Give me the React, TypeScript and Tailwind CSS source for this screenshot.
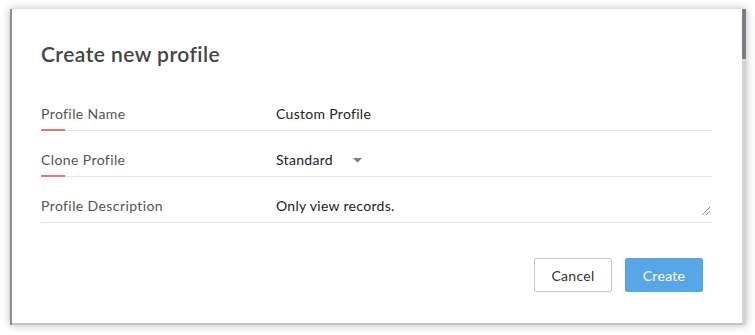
import React from "react";

function Row({
  label,
  value,
  marked,
  children,
}: {
  label: string;
  value: string;
  marked?: boolean;
  children?: React.ReactNode;
}) {
  return (
    <div className="relative flex h-[46px] items-end border-b border-[#e6e6e6] pb-[6px]">
      <div className="w-[235px] text-[14px] leading-[20px] tracking-[0.4px] text-[#555]">{label}</div>
      <div className="flex flex-1 items-center text-[14px] leading-[20px] tracking-[0.3px] text-[#222]">
        <span>{value}</span>
        {children}
      </div>
      {marked && (
        <div className="absolute bottom-[-1px] left-0 h-[2px] w-[24px] bg-[#e5776b]" />
      )}
    </div>
  );
}

export default function App() {
  return (
    <div
      className="h-[335px] w-[755px] overflow-hidden bg-white pl-[10px] pt-[9px]"
      style={{ fontFamily: "Lato, 'Open Sans', sans-serif" }}
    >
      <div className="flex h-[316px] w-[736px] shadow-[0_0_8px_rgba(0,0,0,0.28)]">
        <div className="w-[2px] bg-[#8c8c8c]" />
        <div className="flex flex-1 flex-col border-b-2 border-[#c4c4c4] bg-white pl-[29px] pr-[30px] pt-[31px]">
          <h1 className="text-[21px] font-semibold leading-[28px] tracking-[0.45px] text-[#444]">Create new profile</h1>
          <div className="mt-[17px] flex flex-col">
            <Row label="Profile Name" value="Custom Profile" marked />
            <Row label="Clone Profile" value="Standard" marked>
              <svg width="9" height="5" viewBox="0 0 9 5" className="ml-[20px] mt-[1px]">
                <path d="M0 0 L9 0 L4.5 4.5 Z" fill="#7a7a7a" />
              </svg>
            </Row>
            <div className="relative">
              <Row label="Profile Description" value="Only view records." />
              <svg width="10" height="10" viewBox="0 0 10 10" className="absolute bottom-[7px] right-[1px]">
                <path d="M1 9 L9 1 M5 9 L9 5" stroke="#8a8a8a" strokeWidth="1" />
              </svg>
            </div>
          </div>
          <div className="mt-[35px] flex justify-end gap-[13px] pr-[9px]">
            <button className="h-[34px] w-[78px] rounded-[2px] border border-[#c8c8c8] bg-white text-[14px] tracking-[0.3px] text-[#333]">
              Cancel
            </button>
            <button className="h-[34px] w-[78px] rounded-[2px] bg-[#57a7e8] text-[14px] tracking-[0.3px] text-white">
              Create
            </button>
          </div>
        </div>
        <div className="flex w-[4px] flex-col">
          <div className="h-[50px] bg-[#7b7e86]" />
          <div className="flex-1 bg-[#d4d4d4]" />
        </div>
      </div>
    </div>
  );
}
